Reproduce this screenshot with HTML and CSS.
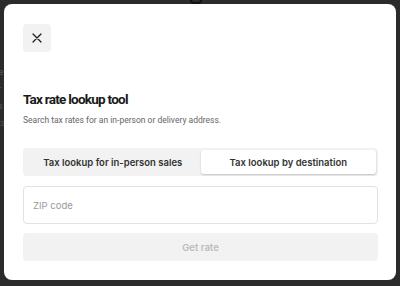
FILE: index.html
```html
<!DOCTYPE html>
<html>
<head>
<meta charset="utf-8">
<link rel="stylesheet" href="styles.css">
</head>
<body>
<div class="backdrop">
  <div class="bg-notch"></div>
  <div class="bg-text">
    <span>es</span><span>r</span><span>s</span><span>ta</span>
  </div>
</div>
<div class="modal">
  <button class="close" aria-label="Close">
    <svg width="10" height="10" viewBox="0 0 10 10"><path d="M1 1L9 9M9 1L1 9" stroke="#1a1a1a" stroke-width="1.2" stroke-linecap="round"/></svg>
  </button>
  <h1 class="title">Tax rate lookup tool</h1>
  <p class="subtitle">Search tax rates for an in-person or delivery address.</p>
  <div class="segmented">
    <div class="seg">Tax lookup for in-person sales</div>
    <div class="seg active">Tax lookup by destination</div>
  </div>
  <div class="input">ZIP code</div>
  <div class="btn">Get rate</div>
</div>
</body>
</html>
```
FILE: styles.css
```css
* { box-sizing: border-box; }
html, body { margin: 0; height: 100%; }
body {
  background: #2b2b2b;
  font-family: Inter, "Noto Sans", sans-serif;
  padding: 4px;
  position: relative;
  overflow: hidden;
}
.backdrop { position: absolute; inset: 0; }
.bg-notch {
  position: absolute; left: 190px; top: -4px; width: 12px; height: 8px;
  border: 2px solid #111; border-radius: 4px;
}
.bg-text {
  position: absolute; left: -2px; top: 66px;
  display: flex; flex-direction: column; gap: 6px;
  font-size: 9px; color: #555;
}
.modal {
  position: relative;
  width: 392px;
  height: 276px;
  background: #fff;
  border-radius: 8px;
  padding: 20px 19px 0 19px;
  display: flex;
  flex-direction: column;
}
.close {
  width: 28px; height: 28px;
  background: #f2f2f2;
  border: none; border-radius: 4px;
  display: flex; align-items: center; justify-content: center;
  padding: 0;
}
.title {
  margin: 38px 0 0;
  font-family: Roboto, Inter, sans-serif;
  font-size: 13.5px;
  line-height: 18px;
  font-weight: 700;
  color: #1a1a1a;
  letter-spacing: -0.75px;
}
.subtitle {
  margin: 6px 0 0;
  font-family: Roboto, Inter, sans-serif;
  font-size: 8.5px;
  line-height: 12px;
  color: #666;
}
.segmented {
  margin-top: 22px;
  height: 28px;
  background: #f2f2f2;
  border-radius: 4px;
  padding: 2px;
  display: flex;
  width: 355px;
}
.seg {
  flex: 1;
  display: flex; align-items: center; justify-content: center;
  font-size: 9.5px; font-weight: 600; color: #333;
  border-radius: 3px;
}
.seg.active {
  background: #fff;
  box-shadow: 0 1px 2px rgba(0,0,0,0.2);
}
.input {
  margin-top: 10px;
  height: 38px;
  width: 355px;
  border: 1px solid #e2e2e2;
  border-radius: 4px;
  display: flex; align-items: center;
  padding-left: 9px;
  font-size: 9.5px; color: #999;
}
.btn {
  margin-top: 9px;
  height: 28px;
  width: 355px;
  background: #f2f2f2;
  border-radius: 4px;
  display: flex; align-items: center; justify-content: center;
  font-size: 9.5px; font-weight: 600; color: #bbb;
}
```
